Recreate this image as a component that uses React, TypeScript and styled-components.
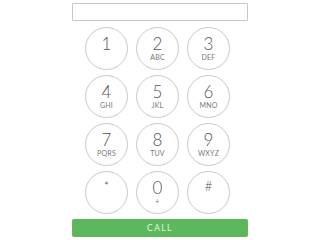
import React from "react";
import styled, { createGlobalStyle } from "styled-components";

const Global = createGlobalStyle`
  html, body { margin: 0; padding: 0; background: #fff; }
  body { font-family: Lato, "Open Sans", sans-serif; }
`;

const Wrap = styled.div`
  width: 176px;
  margin: 0 auto;
  padding-top: 3px;
  display: flex;
  flex-direction: column;
`;

const Display = styled.input`
  box-sizing: border-box;
  width: 176px;
  height: 18px;
  border: 1px solid #c8c8c8;
  border-radius: 1px;
  outline: none;
  padding: 0 4px;
  font-family: Lato, sans-serif;
  font-size: 12px;
`;

const Pad = styled.div`
  display: grid;
  grid-template-columns: repeat(3, 43px);
  column-gap: 8px;
  row-gap: 5px;
  margin-top: 6px;
  padding-left: 13px;
`;

const Key = styled.button`
  box-sizing: border-box;
  width: 43px;
  height: 43px;
  border-radius: 50%;
  border: 1px solid #c9c9c9;
  background: #fff;
  padding: 0;
  display: flex;
  flex-direction: column;
  align-items: center;
  justify-content: flex-start;
  padding-top: 7px;
  font-family: Lato, sans-serif;
  cursor: pointer;
`;

const Digit = styled.span<{ $symbol?: boolean }>`
  font-size: ${(p) => (p.$symbol ? "13px" : "17px")};
  font-weight: 300;
  color: #555;
  line-height: 18px;
  height: 18px;
  margin-top: ${(p) => (p.$symbol ? "-2px" : "0")};
`;

const Letters = styled.span`
  font-size: 7px;
  font-weight: 400;
  color: #777;
  line-height: 8px;
  height: 8px;
  letter-spacing: 0.2px;
`;

const Call = styled.button`
  margin-top: 5px;
  height: 18px;
  width: 176px;
  border: none;
  border-radius: 2px;
  background: #5cb85c;
  color: #e4f5e1;
  font-family: Lato, sans-serif;
  font-size: 8.5px;
  font-weight: 400;
  letter-spacing: 1.4px;
  padding: 0;
  cursor: pointer;
`;

const keys: [string, string][] = [
  ["1", ""],
  ["2", "ABC"],
  ["3", "DEF"],
  ["4", "GHI"],
  ["5", "JKL"],
  ["6", "MNO"],
  ["7", "PQRS"],
  ["8", "TUV"],
  ["9", "WXYZ"],
  ["*", ""],
  ["0", "+"],
  ["#", ""],
];

export default function App() {
  return (
    <>
      <Global />
      <Wrap>
        <Display type="text" />
        <Pad>
          {keys.map(([d, l]) => (
            <Key key={d}>
              <Digit $symbol={d === "*" || d === "#"}>{d}</Digit>
              <Letters>{l}</Letters>
            </Key>
          ))}
        </Pad>
        <Call>CALL</Call>
      </Wrap>
    </>
  );
}
